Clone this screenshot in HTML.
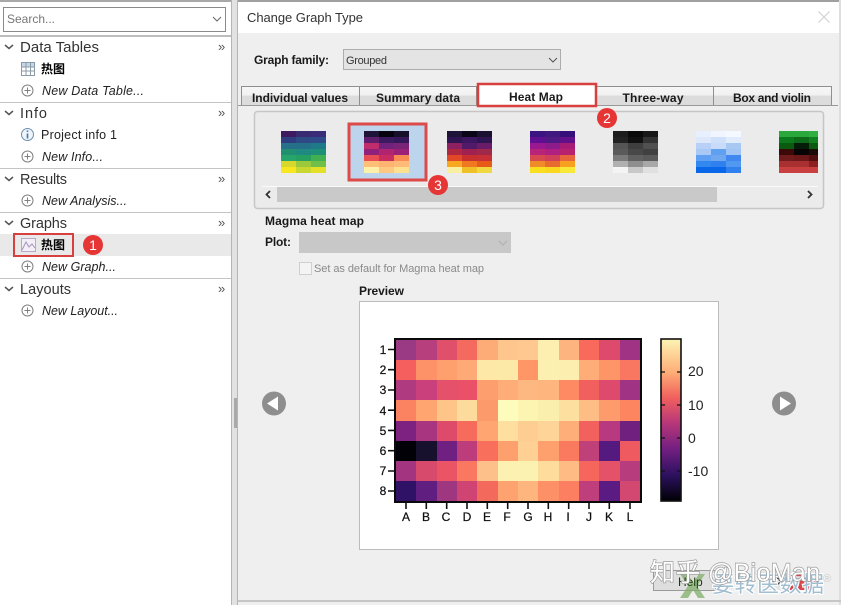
<!DOCTYPE html>
<html><head><meta charset="utf-8"><title>Change Graph Type</title>
<style>
html,body{margin:0;padding:0;background:#efefef;width:841px;height:605px;overflow:hidden}
svg{position:absolute;left:0;top:0}
text{font-family:"Liberation Sans","Noto Sans CJK SC",sans-serif;fill:#222}
.h{font-size:14.500px;fill:#333}
.n{font-size:12.500px;font-style:italic;fill:#222}
.b{font-size:12px;font-weight:bold;fill:#1a1a1a}
.c{font-size:12px;font-weight:bold;fill:#000;font-family:"Noto Sans CJK SC","Liberation Sans",sans-serif}
.t{font-size:12px;font-weight:bold;fill:#1a1a1a;text-anchor:middle}
.a{font-size:12px;fill:#111;text-anchor:middle;stroke:#111;stroke-width:.25}
.w{font-size:14px;fill:#fff;text-anchor:middle}
.g{position:absolute;display:grid}
.g i{display:block}
.th{grid-template-columns:repeat(3,15px);grid-auto-rows:6px;top:131px}
.hm{left:396px;top:340px;width:244px;height:161px;grid-template-columns:repeat(12,1fr);grid-template-rows:repeat(8,1fr);box-sizing:content-box;margin:-2px 0 0 -2px;border:2px solid #0a0a0a}
</style></head><body>
<svg width="841" height="605" viewBox="0 0 841 605">
<defs>
<linearGradient id="mg" x1="0" y1="0" x2="0" y2="1">
<stop offset="0" stop-color="#fcf3b4"/><stop offset=".2" stop-color="#feb078"/><stop offset=".36" stop-color="#f1605d"/><stop offset=".52" stop-color="#b73779"/><stop offset=".68" stop-color="#721f81"/><stop offset=".84" stop-color="#2c115f"/><stop offset="1" stop-color="#000004"/>
</linearGradient>
<linearGradient id="tb" x1="0" y1="0" x2="0" y2="1"><stop offset="0" stop-color="#f6f6f6"/><stop offset=".45" stop-color="#f2f2f2"/><stop offset=".5" stop-color="#dcdcdc"/><stop offset="1" stop-color="#dcdcdc"/></linearGradient>
</defs>
<!-- sidebar -->
<rect x="0" y="0" width="232" height="605" fill="#fff"/>
<rect x="0" y="0" width="232" height="2" fill="#a8a8a8"/>
<rect x="232" y="0" width="6" height="605" fill="#e2e2e2"/>
<rect x="231" y="0" width="1" height="605" fill="#b5b5b5"/>
<rect x="237" y="0" width="1" height="605" fill="#b5b5b5"/>
<rect x="234" y="398" width="3" height="30" fill="#a9a9a9"/>
<rect x="3.500" y="7.500" width="222" height="24" fill="#fff" stroke="#8a8a8a"/>
<text x="7" y="23" font-size="12" style="fill:#777" textLength="48">Search...</text>
<path d="M213 17l4 4 4-4" fill="none" stroke="#666"/>
<rect x="0" y="35" width="231" height="2" fill="#bdbdbd"/>
<rect x="0" y="102" width="231" height="1" fill="#c4c4c4"/>
<rect x="0" y="168" width="231" height="1" fill="#c4c4c4"/>
<rect x="0" y="212" width="231" height="1" fill="#c4c4c4"/>
<rect x="0" y="278" width="231" height="1" fill="#c4c4c4"/>
<rect x="0" y="234" width="231" height="22" fill="#e9e9e9"/>
<g fill="none" stroke="#555" stroke-width="1.500">
<path d="M5 45l4 3.500 4-3.500"/><path d="M5 111l4 3.500 4-3.500"/><path d="M5 177l4 3.500 4-3.500"/><path d="M5 221l4 3.500 4-3.500"/><path d="M5 287l4 3.500 4-3.500"/>
</g>
<text class="h" x="20" y="52" textLength="79" style="font-size:15px">Data Tables</text>
<text class="h" x="20" y="118" textLength="27">Info</text>
<text class="h" x="20" y="184" textLength="47">Results</text>
<text class="h" x="20" y="228" textLength="47">Graphs</text>
<text class="h" x="20" y="294" textLength="51">Layouts</text>
<g font-size="13">
<text x="218" y="51" style="fill:#555">»</text><text x="218" y="117" style="fill:#555">»</text><text x="218" y="183" style="fill:#555">»</text><text x="218" y="227" style="fill:#555">»</text><text x="218" y="293" style="fill:#555">»</text>
</g>
<g>
<rect x="21.500" y="62.500" width="13" height="13" fill="#fff" stroke="#8b9aa8"/><rect x="22" y="63" width="12" height="4" fill="#c4d6e8"/>
<path d="M26 63v12M30.500 63v12M22 67h12M22 71h12" stroke="#8b9aa8" fill="none"/>
</g>
<text class="c" x="41" y="73">热图</text>
<text class="c" x="41" y="249">热图</text>
<g fill="none" stroke="#808080">
<circle cx="27.500" cy="90.500" r="5.500"/><path d="M24.500 90.500h6M27.500 87.500v6"/>
<circle cx="27.500" cy="156.500" r="5.500"/><path d="M24.500 156.500h6M27.500 153.500v6"/>
<circle cx="27.500" cy="200.500" r="5.500"/><path d="M24.500 200.500h6M27.500 197.500v6"/>
<circle cx="27.500" cy="266.500" r="5.500"/><path d="M24.500 266.500h6M27.500 263.500v6"/>
<circle cx="27.500" cy="310.500" r="5.500"/><path d="M24.500 310.500h6M27.500 307.500v6"/>
</g>
<circle cx="27.500" cy="134.500" r="6" fill="#eef4fa" stroke="#6e8fae"/>
<path d="M27.500 130.500v1.500M27.500 133.500v5" stroke="#3f78ad" stroke-width="1.600"/>
<text class="n" x="42" y="95" textLength="102">New Data Table...</text>
<text x="41" y="139" font-size="12.500" textLength="76" style="fill:#222">Project info 1</text>
<text class="n" x="42" y="161" textLength="61">New Info...</text>
<text class="n" x="42" y="205" textLength="85">New Analysis...</text>
<text class="n" x="42" y="271" textLength="74">New Graph...</text>
<text class="n" x="42" y="315" textLength="76">New Layout...</text>
<rect x="21.500" y="238.500" width="14" height="13" fill="#f3eff6" stroke="#b9a9c8"/>
<path d="M22 250l4-8 3 5 3-3 3 4" fill="none" stroke="#a890c0"/>
<rect x="14" y="234" width="59" height="22" fill="none" stroke="#d8403f" stroke-width="2"/>
<circle cx="93" cy="245" r="10" fill="#e63535"/><text class="w" x="93" y="250">1</text>

<!-- dialog -->
<rect x="238" y="0" width="603" height="605" fill="#efefef"/>
<rect x="238" y="0" width="603" height="2" fill="#a0a0a0"/>
<rect x="238" y="2" width="601" height="31" fill="#fff"/>
<rect x="839" y="0" width="2" height="605" fill="#dedede"/>
<text x="247" y="22" font-size="13" textLength="116" style="fill:#333">Change Graph Type</text>
<path d="M818.500 11.500l11 11M829.500 11.500l-11 11" stroke="#d2d2d2" stroke-width="1.200"/>
<text class="b" x="254" y="64" textLength="75">Graph family:</text>
<rect x="343.500" y="49.500" width="217" height="20" fill="#e4e4e4" stroke="#adadad"/>
<text x="346" y="64" font-size="11" textLength="41" style="fill:#333">Grouped</text>
<path d="M549 58l4 4 4-4" fill="none" stroke="#555"/>
<!-- tabs -->
<rect x="241.500" y="86.500" width="118" height="19" fill="url(#tb)" stroke="#8f8f8f"/>
<rect x="359.500" y="86.500" width="117" height="19" fill="url(#tb)" stroke="#8f8f8f"/>
<rect x="596.500" y="86.500" width="117" height="19" fill="url(#tb)" stroke="#8f8f8f"/>
<rect x="713.500" y="86.500" width="118" height="19" fill="url(#tb)" stroke="#8f8f8f"/>
<rect x="238" y="105" width="600" height="1" fill="#9a9a9a"/>
<rect x="478" y="84" width="118" height="22" fill="#fff" stroke="#d8403f" stroke-width="2.500"/>
<text class="t" x="300" y="102" textLength="96">Individual values</text>
<text class="t" x="418" y="102" textLength="84">Summary data</text>
<text class="t" x="536" y="101" textLength="54">Heat Map</text>
<text class="t" x="653" y="102" textLength="61">Three-way</text>
<text class="t" x="772" y="102" textLength="78">Box and violin</text>
<!-- gallery -->
<rect x="254.500" y="111.500" width="569" height="97" rx="3" fill="#ebebeb" stroke="#c6c6c6" stroke-width="1.500"/>
<rect x="349" y="124" width="77" height="56" fill="#bcd4ec" stroke="#dc4a4a" stroke-width="3"/>
<rect x="262" y="186" width="556" height="1" fill="#fafafa"/>
<rect x="277" y="187" width="440" height="15" fill="#c9c9c9"/>
<path d="M270 191l-3.500 3.500 3.500 3.500M808 191l3.500 3.500-3.500 3.500" fill="none" stroke="#333" stroke-width="1.800"/>
<circle cx="438" cy="185" r="10" fill="#e63535"/><text class="w" x="438" y="190">3</text>
<circle cx="607" cy="118" r="10" fill="#e63535"/><text class="w" x="607" y="123">2</text>
<!-- options -->
<text class="b" x="265" y="225" textLength="99">Magma heat map</text>
<text class="b" x="265" y="246" textLength="26">Plot:</text>
<rect x="299" y="232" width="212" height="21" fill="#c8c8c8"/>
<path d="M499 241l4 4 4-4" fill="none" stroke="#aeaeae"/>
<rect x="299.500" y="262.500" width="12" height="12" fill="#f4f4f4" stroke="#cfcfcf"/>
<text x="314" y="272" font-size="11" textLength="170" style="fill:#8a8a8a">Set as default for Magma heat map</text>
<text class="b" x="359" y="295" textLength="45">Preview</text>
<rect x="359.500" y="301.500" width="359" height="248" fill="#fff" stroke="#bcbcbc"/>
<!-- arrows -->
<circle cx="274" cy="403.500" r="12" fill="#8e8e8e"/><path d="M267 403.500l11-7v14z" fill="#fff"/>
<circle cx="784" cy="403.500" r="12" fill="#8e8e8e"/><path d="M791 403.500l-11-7v14z" fill="#fff"/>
<!-- heatmap axes -->
<g stroke="#111" stroke-width="1.600">
<path d="M388 349.500h6M388 369.700h6M388 390h6M388 410.200h6M388 430.400h6M388 450.700h6M388 471h6M388 491h6"/>
<path d="M406 503v6M426.300 503v6M446.700 503v6M467 503v6M487.300 503v6M507.700 503v6M528 503v6M548.300 503v6M568.700 503v6M589 503v6M609.300 503v6M630 503v6"/>
</g>
<text class="a" x="383" y="354">1</text><text class="a" x="383" y="374">2</text><text class="a" x="383" y="394">3</text><text class="a" x="383" y="415">4</text><text class="a" x="383" y="435">5</text><text class="a" x="383" y="455">6</text><text class="a" x="383" y="475">7</text><text class="a" x="383" y="495">8</text>
<text class="a" x="406" y="521">A</text><text class="a" x="426" y="521">B</text><text class="a" x="446" y="521">C</text><text class="a" x="467" y="521">D</text><text class="a" x="487" y="521">E</text><text class="a" x="507" y="521">F</text><text class="a" x="528" y="521">G</text><text class="a" x="548" y="521">H</text><text class="a" x="568" y="521">I</text><text class="a" x="589" y="521">J</text><text class="a" x="609" y="521">K</text><text class="a" x="630" y="521">L</text>
<!-- colorbar -->
<rect x="661" y="339" width="20" height="162" fill="url(#mg)" stroke="#111" stroke-width="1.600"/>
<path d="M661 372h4M677 372h4M661 405h4M677 405h4M661 438h4M677 438h4M661 471h4M677 471h4" stroke="#111" stroke-width="1.200"/>
<g font-size="14"><text x="688" y="376" style="fill:#222">20</text><text x="688" y="410" style="fill:#222">10</text><text x="688" y="443" style="fill:#222">0</text><text x="688" y="476" style="fill:#222">-10</text></g>
<!-- bottom -->
<rect x="238" y="600" width="603" height="2" fill="#c6c6c6"/>
<rect x="653.500" y="570.500" width="62" height="20" fill="#dedede" stroke="#9a9a9a"/>
<rect x="760" y="570" width="60" height="20" fill="#e6e6e6"/>
<path d="M680 574l8 0 5 9 6-9 6 0-8 12 8 12h-7l-5-8-5 8h-8l8-12z" fill="#7fae68" opacity=".75"/>
<text x="678" y="586" font-size="12" style="fill:#1b3a10">Help</text>
<text x="772" y="585" font-size="11" style="fill:#222">OK</text>
<path d="M790 575h22l3 7-3 8h-22z" fill="#d8333a" opacity=".9"/>
<text x="712" y="592" font-size="22" font-weight="bold" textLength="112" style="fill:#fff;stroke:#fff;stroke-width:1.500;paint-order:stroke">要转医数据</text>
<text x="712" y="592" font-size="22" textLength="112" style="fill:#6f9ab8;opacity:.65">要转医数据</text>
<text x="650" y="581" font-size="25" textLength="170" style="fill:#fff;stroke:#9c9c9c;stroke-width:1.400;paint-order:stroke">知乎 @BioMan</text>
<text x="823" y="582" font-size="11" style="fill:#ccc">®</text>
</svg>

<div class="g th" style="left:281px"><i style="background:#3d1a60"></i><i style="background:#3a2a72"></i><i style="background:#3a2c78"></i><i style="background:#2e3c80"></i><i style="background:#2e4a84"></i><i style="background:#2f4a88"></i><i style="background:#26708a"></i><i style="background:#237088"></i><i style="background:#1f7a88"></i><i style="background:#209070"></i><i style="background:#1f8a80"></i><i style="background:#1f9078"></i><i style="background:#25a46c"></i><i style="background:#25a060"></i><i style="background:#40b050"></i><i style="background:#d8d82c"></i><i style="background:#9cc83c"></i><i style="background:#70bf48"></i><i style="background:#f8e620"></i><i style="background:#c8d830"></i><i style="background:#e4e028"></i></div>
<div class="g th" style="left:364px"><i style="background:#1e1438"></i><i style="background:#05040f"></i><i style="background:#16102a"></i><i style="background:#5e1e6c"></i><i style="background:#3c1a60"></i><i style="background:#35185a"></i><i style="background:#c02c6c"></i><i style="background:#70227c"></i><i style="background:#7a2478"></i><i style="background:#90207a"></i><i style="background:#b02470"></i><i style="background:#9c2078"></i><i style="background:#e84d54"></i><i style="background:#c82c60"></i><i style="background:#f88a54"></i><i style="background:#fec078"></i><i style="background:#feb470"></i><i style="background:#feba78"></i><i style="background:#fdf0a8"></i><i style="background:#fec880"></i><i style="background:#fde090"></i></div>
<div class="g th" style="left:447px"><i style="background:#1e1438"></i><i style="background:#0a0618"></i><i style="background:#1a1030"></i><i style="background:#2e1450"></i><i style="background:#3c1660"></i><i style="background:#2e1450"></i><i style="background:#8c2060"></i><i style="background:#501a68"></i><i style="background:#6a1c68"></i><i style="background:#b02840"></i><i style="background:#a02050"></i><i style="background:#a02848"></i><i style="background:#e04828"></i><i style="background:#c83030"></i><i style="background:#c83038"></i><i style="background:#f8a820"></i><i style="background:#f07820"></i><i style="background:#e85a18"></i><i style="background:#f8f0a0"></i><i style="background:#f0c028"></i><i style="background:#f0d840"></i></div>
<div class="g th" style="left:530px"><i style="background:#3a1480"></i><i style="background:#40187e"></i><i style="background:#35107a"></i><i style="background:#5e1090"></i><i style="background:#501a85"></i><i style="background:#601088"></i><i style="background:#9a1890"></i><i style="background:#8c1c8c"></i><i style="background:#a81c78"></i><i style="background:#b82478"></i><i style="background:#b02080"></i><i style="background:#b82070"></i><i style="background:#d84850"></i><i style="background:#d04058"></i><i style="background:#e8643c"></i><i style="background:#f08c28"></i><i style="background:#e86c30"></i><i style="background:#f8a020"></i><i style="background:#f8e020"></i><i style="background:#fbd820"></i><i style="background:#f8e838"></i></div>
<div class="g th" style="left:613px"><i style="background:#1c1c1c"></i><i style="background:#0a0a0a"></i><i style="background:#181818"></i><i style="background:#222"></i><i style="background:#111"></i><i style="background:#333"></i><i style="background:#555"></i><i style="background:#3f3f3f"></i><i style="background:#505050"></i><i style="background:#5a5a5a"></i><i style="background:#484848"></i><i style="background:#404040"></i><i style="background:#7a7a7a"></i><i style="background:#606060"></i><i style="background:#5a5a5a"></i><i style="background:#b0b0b0"></i><i style="background:#8e8e8e"></i><i style="background:#a8a8a8"></i><i style="background:#f4f4f4"></i><i style="background:#c8c8c8"></i><i style="background:#e0e0e0"></i></div>
<div class="g th" style="left:696px"><i style="background:#e8f0fe"></i><i style="background:#f0f5ff"></i><i style="background:#f4f8ff"></i><i style="background:#dde8fb"></i><i style="background:#cfe0fb"></i><i style="background:#e0ebfc"></i><i style="background:#b8d0f8"></i><i style="background:#c8dcfa"></i><i style="background:#a8c8f4"></i><i style="background:#a8c8f5"></i><i style="background:#60a0f0"></i><i style="background:#a0c4f4"></i><i style="background:#5fa0f4"></i><i style="background:#70a8f0"></i><i style="background:#4088f0"></i><i style="background:#3388f0"></i><i style="background:#3080f0"></i><i style="background:#5098f0"></i><i style="background:#0a68e8"></i><i style="background:#0a68e8"></i><i style="background:#3080f0"></i></div>
<div class="g th" style="left:779px;grid-template-columns:15px 15px 9px"><i style="background:#2aa83c"></i><i style="background:#2aa83c"></i><i style="background:#30b040"></i><i style="background:#0c7a1c"></i><i style="background:#0c6a18"></i><i style="background:#108020"></i><i style="background:#0a5a10"></i><i style="background:#041c08"></i><i style="background:#0a5a10"></i><i style="background:#3c0808"></i><i style="background:#080404"></i><i style="background:#1c0a06"></i><i style="background:#701c1c"></i><i style="background:#6c1818"></i><i style="background:#501010"></i><i style="background:#a83030"></i><i style="background:#a83030"></i><i style="background:#8c2020"></i><i style="background:#c84040"></i><i style="background:#c84040"></i><i style="background:#c84040"></i></div>

<div class="g hm">
<i style="background:#9a3a84"></i><i style="background:#b83f7e"></i><i style="background:#e0506a"></i><i style="background:#f56a5e"></i><i style="background:#fdac78"></i><i style="background:#fec58c"></i><i style="background:#fec890"></i><i style="background:#fcefb0"></i><i style="background:#feb47e"></i><i style="background:#f9695c"></i><i style="background:#de4a6c"></i><i style="background:#a13384"></i>
<i style="background:#f5605f"></i><i style="background:#fd9268"></i><i style="background:#fe9f6e"></i><i style="background:#feaa76"></i><i style="background:#fde8a8"></i><i style="background:#fce9a8"></i><i style="background:#fe9666"></i><i style="background:#fbf0b0"></i><i style="background:#fbeeae"></i><i style="background:#feac78"></i><i style="background:#fd9567"></i><i style="background:#f97760"></i>
<i style="background:#b03a80"></i><i style="background:#c9407c"></i><i style="background:#e5516a"></i><i style="background:#ea5168"></i><i style="background:#fd9e6f"></i><i style="background:#fead78"></i><i style="background:#fdb780"></i><i style="background:#feb67e"></i><i style="background:#fd8a63"></i><i style="background:#f1605f"></i><i style="background:#dd4a6d"></i><i style="background:#a03384"></i>
<i style="background:#fc8361"></i><i style="background:#fea570"></i><i style="background:#fec488"></i><i style="background:#fddb9c"></i><i style="background:#fd9a6c"></i><i style="background:#fdfcbc"></i><i style="background:#fcf5b2"></i><i style="background:#fbefae"></i><i style="background:#fde0a0"></i><i style="background:#febd85"></i><i style="background:#fe9b6c"></i><i style="background:#fd8560"></i>
<i style="background:#7e2282"></i><i style="background:#a8357f"></i><i style="background:#de4a6a"></i><i style="background:#f76b5c"></i><i style="background:#fea572"></i><i style="background:#fedf9f"></i><i style="background:#fecd92"></i><i style="background:#fed498"></i><i style="background:#feae79"></i><i style="background:#f2615e"></i><i style="background:#b8397f"></i><i style="background:#70207f"></i>
<i style="background:#020108"></i><i style="background:#17112e"></i><i style="background:#6f2080"></i><i style="background:#bd3c7c"></i><i style="background:#f8705b"></i><i style="background:#fe9f6e"></i><i style="background:#fed094"></i><i style="background:#fe9f6e"></i><i style="background:#f97a5f"></i><i style="background:#c0407a"></i><i style="background:#541a80"></i><i style="background:#ee5a60"></i>
<i style="background:#a3347f"></i><i style="background:#d84a6c"></i><i style="background:#ea5465"></i><i style="background:#f9785f"></i><i style="background:#fec08a"></i><i style="background:#fcf1b0"></i><i style="background:#fbf2b2"></i><i style="background:#fddc9c"></i><i style="background:#febc84"></i><i style="background:#f6665c"></i><i style="background:#e4526a"></i><i style="background:#b63c7e"></i>
<i style="background:#2f1165"></i><i style="background:#5f1e80"></i><i style="background:#9f3680"></i><i style="background:#cf4472"></i><i style="background:#f36a5c"></i><i style="background:#fea26f"></i><i style="background:#feb57e"></i><i style="background:#fd9066"></i><i style="background:#fb7f60"></i><i style="background:#bf3e7c"></i><i style="background:#5a1c82"></i><i style="background:#d24870"></i>
</div>
</body></html>
